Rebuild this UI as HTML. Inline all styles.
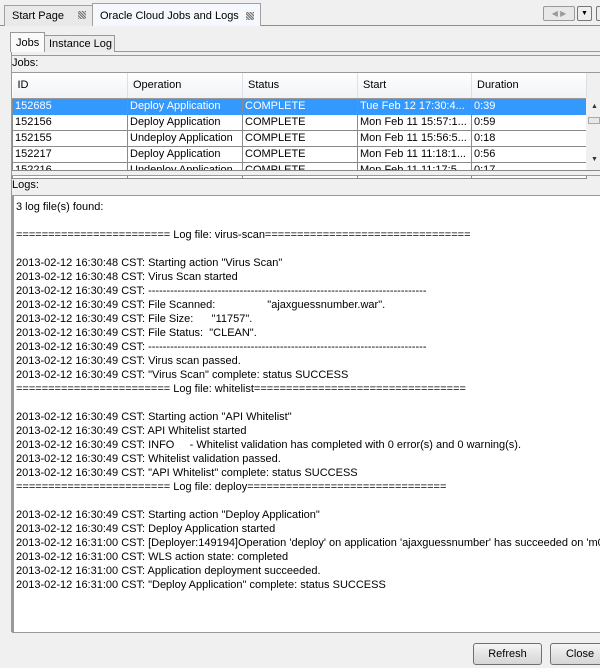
<!DOCTYPE html><html><head><style>
*{margin:0;padding:0;box-sizing:border-box}
body{width:600px;height:668px;background:#f0f0f0;font-family:"Liberation Sans",sans-serif;font-size:11px;color:#000;position:relative;overflow:hidden}
.a{position:absolute;white-space:nowrap}
.tab{position:absolute;top:5px;height:21px;border:1px solid #a0a0a0;border-bottom:none;padding:4px 0 0 7px;font-size:11px;white-space:nowrap}
.x{position:absolute;right:6px;top:5px;width:8px;height:8px;background:repeating-linear-gradient(45deg,#777 0 1px,#ddd 1px 2px)}
table{border-collapse:collapse;position:absolute;left:12px;top:73px;width:574px;table-layout:fixed;background:#fff}
td,th{height:16px;border:1px solid #8a8a8a;padding:0 2px;white-space:nowrap;overflow:hidden;font-weight:normal;text-align:left;font-size:11px;line-height:14px}
th{height:25px;background:linear-gradient(#fff,#f1f2f4);border:none;border-right:1px solid #dde;border-bottom:1px solid #999;padding-left:5px}
tr.s td{background:#3399ff;color:#fff;border-color:#3399ff #8a8a8a}
.logbox{position:absolute;left:12px;top:195px;width:588px;height:438px;background:#fff;border-left:2px solid #999;border-top:1px solid #999;border-bottom:1px solid #999;overflow:hidden}
.log{position:absolute;left:2px;top:4px;line-height:14px;font-size:11px;white-space:pre}
.btn{position:absolute;top:643px;height:22px;border:1px solid #707070;border-radius:3px;background:linear-gradient(#f6f6f6,#e4e4e4 50%,#d6d6d6);text-align:center;line-height:20px;font-size:11px}
</style></head><body>
<div class="a" style="left:0;top:25px;width:600px;height:1px;background:#8e8e8e"></div>
<div class="tab" style="left:4px;width:89px;background:#e9e9e9">Start Page<span class="x"></span></div>
<div class="tab" style="left:92px;width:169px;top:3px;height:23px;background:#f5f8fc;padding-top:6px">Oracle Cloud Jobs and Logs<span class="x" style="top:8px"></span></div>
<div class="a" style="left:543px;top:6px;width:32px;height:15px;border:1px solid #999;border-radius:2px;background:#e8e8e8;color:#999;font-size:8px;line-height:13px;text-align:center">◀ ▶</div>
<div class="a" style="left:577px;top:6px;width:15px;height:15px;border:1px solid #777;border-radius:2px;background:#eee;font-size:7px;line-height:13px;text-align:center">▼</div>
<div class="a" style="left:596px;top:6px;width:8px;height:15px;border:1px solid #777;border-radius:2px;background:#eee"></div>
<div class="a" style="left:10px;top:51px;width:590px;height:1px;background:#999"></div>
<div class="a" style="left:10px;top:32px;width:35px;height:20px;border:1px solid #999;border-bottom:none;background:#fafafa;padding:4px 0 0 5px">Jobs</div>
<div class="a" style="left:44px;top:35px;width:71px;height:17px;border:1px solid #999;border-bottom:none;background:#ececec;padding:2px 0 0 4px">Instance Log</div>
<div class="a" style="left:11px;top:52px;width:1px;height:580px;background:#999"></div>
<div class="a" style="left:12px;top:55px;width:588px;height:1px;background:#999"></div>
<div class="a" style="left:12px;top:57px">Jobs:</div>
<div class="a" style="left:12px;top:72px;width:588px;height:1px;background:#999"></div>
<table>
<colgroup><col style="width:115px"><col style="width:115px"><col style="width:115px"><col style="width:114px"><col style="width:115px"></colgroup>
<tr><th>ID</th><th>Operation</th><th>Status</th><th>Start</th><th>Duration</th></tr>
<tr class="s"><td>152685</td><td>Deploy Application</td><td>COMPLETE</td><td>Tue Feb 12 17:30:4...</td><td>0:39</td></tr>
<tr><td>152156</td><td>Deploy Application</td><td>COMPLETE</td><td>Mon Feb 11 15:57:1...</td><td>0:59</td></tr>
<tr><td>152155</td><td>Undeploy Application</td><td>COMPLETE</td><td>Mon Feb 11 15:56:5...</td><td>0:18</td></tr>
<tr><td>152217</td><td>Deploy Application</td><td>COMPLETE</td><td>Mon Feb 11 11:18:1...</td><td>0:56</td></tr>
<tr><td>152216</td><td>Undeploy Application</td><td>COMPLETE</td><td>Mon Feb 11 11:17:5...</td><td>0:17</td></tr>
</table>
<div class="a" style="left:586px;top:97px;width:14px;height:74px;background:#f0f0f0"></div>
<div class="a" style="left:591px;top:103px;font-size:7px;color:#333">▲</div>
<div class="a" style="left:588px;top:117px;width:12px;height:7px;border:1px solid #aaa;background:#e8e8e8"></div>
<div class="a" style="left:591px;top:156px;font-size:7px;color:#333">▼</div>
<div class="a" style="left:12px;top:170px;width:588px;height:6px;background:#f0f0f0;border-top:1px solid #888;border-bottom:1px solid #999"></div>
<div class="a" style="left:12px;top:179px">Logs:</div>
<div class="logbox"><div class="log">3 log file(s) found:

======================== Log file: virus-scan================================

2013-02-12 16:30:48 CST: Starting action "Virus Scan"
2013-02-12 16:30:48 CST: Virus Scan started
2013-02-12 16:30:49 CST: ----------------------------------------------------------------------------
2013-02-12 16:30:49 CST: File Scanned:                 "ajaxguessnumber.war".
2013-02-12 16:30:49 CST: File Size:      "11757".
2013-02-12 16:30:49 CST: File Status:  "CLEAN".
2013-02-12 16:30:49 CST: ----------------------------------------------------------------------------
2013-02-12 16:30:49 CST: Virus scan passed.
2013-02-12 16:30:49 CST: "Virus Scan" complete: status SUCCESS
======================== Log file: whitelist=================================

2013-02-12 16:30:49 CST: Starting action "API Whitelist"
2013-02-12 16:30:49 CST: API Whitelist started
2013-02-12 16:30:49 CST: INFO     - Whitelist validation has completed with 0 error(s) and 0 warning(s).
2013-02-12 16:30:49 CST: Whitelist validation passed.
2013-02-12 16:30:49 CST: "API Whitelist" complete: status SUCCESS
======================== Log file: deploy===============================

2013-02-12 16:30:49 CST: Starting action "Deploy Application"
2013-02-12 16:30:49 CST: Deploy Application started
2013-02-12 16:31:00 CST: [Deployer:149194]Operation 'deploy' on application 'ajaxguessnumber' has succeeded on 'm0'
2013-02-12 16:31:00 CST: WLS action state: completed
2013-02-12 16:31:00 CST: Application deployment succeeded.
2013-02-12 16:31:00 CST: "Deploy Application" complete: status SUCCESS</div></div>
<div class="btn" style="left:473px;width:69px">Refresh</div>
<div class="btn" style="left:550px;width:60px">Close</div>
</body></html>
